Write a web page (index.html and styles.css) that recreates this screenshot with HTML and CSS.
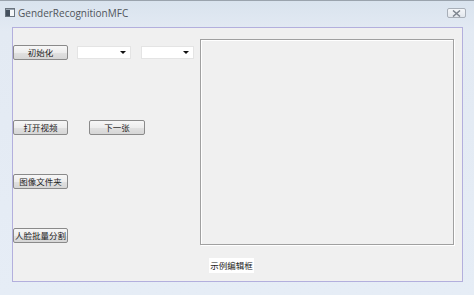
FILE: index.html
```html
<!DOCTYPE html>
<html lang="zh">

<head>
    <meta charset="UTF-8">
    <title>GenderRecognitionMFC</title>
    <link rel="stylesheet" href="styles.css">
</head>

<body>
    <div class="window">
        <div class="titlebar">
            <svg class="app-icon" width="10" height="9" viewBox="0 0 10 9">
                <rect x="0.5" y="0.5" width="9" height="8" fill="#f4f6f8" stroke="#6a747e"/>
                <rect x="1" y="2" width="4" height="6" fill="#44505e"/>
                <rect x="1" y="1" width="8" height="1" fill="#9aa4b0"/>
            </svg>
            <span class="title">GenderRecognitionMFC</span>
            <div class="close-btn">
                <svg width="9" height="7" viewBox="0 0 9 7">
                    <path d="M1 0.5 L8 6.5 M8 0.5 L1 6.5" stroke="#7c848e" stroke-width="1.5"/>
                </svg>
            </div>
        </div>
        <div class="client">
            <div class="main">
                <div class="left">
                    <div class="row">
                        <button class="btn">初始化</button>
                        <div class="combo combo-first"><span class="arrow"></span></div>
                        <div class="combo combo-second"><span class="arrow"></span></div>
                    </div>
                    <div class="row row-video">
                        <button class="btn">打开视频</button>
                        <button class="btn btn-next">下一张</button>
                    </div>
                    <div class="row row-spaced">
                        <button class="btn">图像文件夹</button>
                    </div>
                    <div class="row row-spaced">
                        <button class="btn">人脸批量分割</button>
                    </div>
                </div>
                <div class="right">
                    <div class="picture"></div>
                    <div class="caption">示例编辑框</div>
                </div>
            </div>
        </div>
    </div>
</body>

</html>
```

FILE: styles.css
```css
body {
    margin: 0;
    font-family: "Noto Sans CJK SC", "DejaVu Sans", sans-serif;
}

.window {
    width: 474px;
    height: 295px;
    background: linear-gradient(to bottom, #d9e3ee 0px, #e3eaf3 30px, #e6edf6 100%);
    border-top: 1px solid #9aa3ad;
    box-sizing: border-box;
    display: flex;
    flex-direction: column;
}

.titlebar {
    height: 26px;
    display: flex;
    align-items: flex-start;
    padding: 6px 0 0 5px;
    box-sizing: border-box;
}

.app-icon {
    margin-top: 1px;
}

.title {
    margin-left: 3px;
    font-family: "Open Sans", "DejaVu Sans", sans-serif;
    font-size: 10px;
    line-height: 12px;
    color: #50555b;
}

.close-btn {
    margin-left: auto;
    margin-right: 8px;
    margin-top: 1px;
    width: 19px;
    height: 10px;
    border: 1px solid #a8afb8;
    border-radius: 2px;
    background: linear-gradient(to bottom, #f4f6f9, #e2e7ed);
    display: flex;
    align-items: center;
    justify-content: center;
    box-sizing: border-box;
}

.close-btn svg {
    display: block;
}

.client {
    margin: 0 12px;
    width: 451px;
    height: 255px;
    border: 1px solid #b3afdd;
    background: #f0f0f0;
    box-sizing: border-box;
    padding-top: 11px;
}

.main {
    display: flex;
    gap: 6px;
}

.left {
    width: 181px;
    padding-top: 6px;
    display: flex;
    flex-direction: column;
}

.row {
    display: flex;
    align-items: center;
}

.row-video {
    margin-top: 60px;
}

.row-spaced {
    margin-top: 39px;
}

.btn {
    width: 55px;
    height: 15px;
    padding: 0;
    border: 1px solid #8a8a8a;
    border-radius: 2px;
    background: linear-gradient(to bottom, #f7f7f7 0%, #ededed 50%, #e1e1e1 51%, #d6d6d6 100%);
    font-family: "Noto Sans CJK SC", sans-serif;
    font-size: 8.5px;
    line-height: 13px;
    color: #222;
}

.btn-next {
    margin-left: 21px;
    width: 56px;
}

.combo {
    position: relative;
    height: 13px;
    background: #fff;
    border: 1px solid #e4e4e4;
    box-sizing: border-box;
}

.combo-first {
    margin-left: 9px;
    width: 54px;
}

.combo-second {
    margin-left: 10px;
    width: 53px;
}

.arrow {
    position: absolute;
    right: 4px;
    top: 4px;
    border-left: 3px solid transparent;
    border-right: 3px solid transparent;
    border-top: 3px solid #111;
}

.right {
    display: flex;
    flex-direction: column;
    align-items: flex-start;
}

.picture {
    width: 254px;
    height: 206px;
    border: 1px solid #a0a0a0;
    box-sizing: border-box;
    box-shadow: 1px 1px 0 #ffffff, inset 1px 1px 0 #ffffff;
}

.caption {
    margin: 13px 0 0 9px;
    width: 45px;
    height: 15px;
    background: #fff;
    font-size: 8.5px;
    line-height: 15px;
    text-align: center;
    color: #222;
}
```
